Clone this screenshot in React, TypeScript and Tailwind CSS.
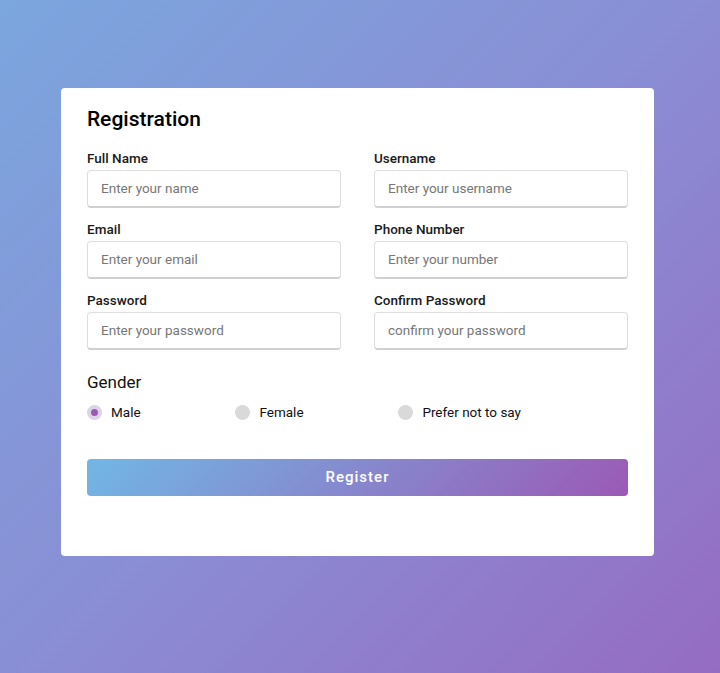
import { useState } from "react";

const fields = [
  { label: "Full Name", placeholder: "Enter your name" },
  { label: "Username", placeholder: "Enter your username" },
  { label: "Email", placeholder: "Enter your email" },
  { label: "Phone Number", placeholder: "Enter your number" },
  { label: "Password", placeholder: "Enter your password" },
  { label: "Confirm Password", placeholder: "confirm your password" },
];

const genders = ["Male", "Female", "Prefer not to say"];

const medium = { fontFamily: "'Roboto Medium', Roboto, 'Noto Sans', sans-serif" };

export default function App() {
  const [gender, setGender] = useState("Male");

  return (
    <div
      className="min-h-[673px] w-full flex pl-[61px] pt-[88px] bg-[linear-gradient(135deg,#7ba6de_0%,#8a8ed4_50%,#956cc2_100%)]"
      style={{ fontFamily: "Roboto, 'Noto Sans', sans-serif" }}
    >
      <div className="w-[593px] h-[468px] bg-white rounded-[4px] px-[26px] pt-[17px]">
        <div className="text-[21px] leading-[29px] text-black" style={medium}>
          Registration
        </div>

        <div className="mt-[16px] grid grid-cols-2 gap-x-[33px] gap-y-[13px]">
          {fields.map((f) => (
            <div key={f.label} className="flex flex-col">
              <span className="text-[13.5px] leading-[16px] text-[#1a1a1a]" style={medium}>
                {f.label}
              </span>
              <input
                placeholder={f.placeholder}
                className="mt-[4px] h-[38px] w-full rounded-[4px] border border-[#dedede] border-b-2 border-b-[#d0d0d0] px-[13px] pb-[1px] text-[13.5px] text-black placeholder:text-[#777] outline-none"
              />
            </div>
          ))}
        </div>

        <div className="mt-[22px] text-[17px] leading-[20px] text-[#111]">
          Gender
        </div>
        <div className="mt-[12px] flex justify-between w-[434px]">
          {genders.map((g) => (
            <label
              key={g}
              className="flex items-center cursor-pointer"
              onClick={() => setGender(g)}
            >
              <span
                className={
                  gender === g
                    ? "w-[15px] h-[15px] rounded-full bg-[#9b59b6] border-[4px] border-[#dcd3e6]"
                    : "w-[15px] h-[15px] rounded-full bg-[#d9d9d9]"
                }
              />
              <span className="ml-[9px] text-[13.5px] leading-[16px] text-[#111]">
                {g}
              </span>
            </label>
          ))}
        </div>

        <button
          className="mt-[39px] w-full h-[37px] rounded-[4px] bg-[linear-gradient(135deg,#71b7e6,#9b59b6)] text-white text-[15px] tracking-[1px]"
          style={medium}
        >
          Register
        </button>
      </div>
    </div>
  );
}
